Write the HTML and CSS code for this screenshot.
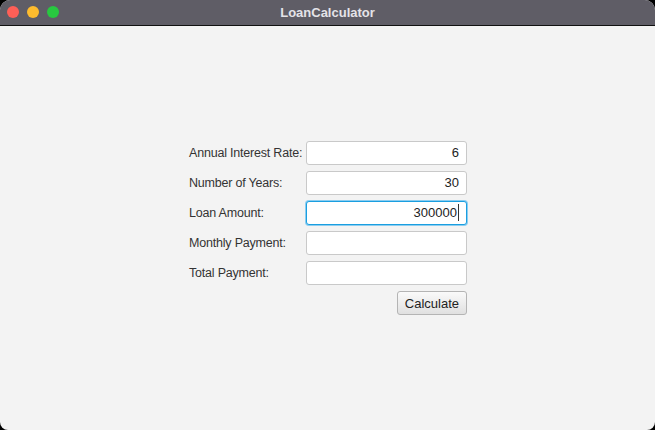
FILE: index.html
```html
<!DOCTYPE html>
<html lang="en">
<head>
    <meta charset="UTF-8">
    <title>LoanCalculator</title>
    <link rel="stylesheet" href="styles.css">
</head>
<body>
    <div class="window">
        <header class="titlebar">
            <div class="lights">
                <span class="light red"></span>
                <span class="light yellow"></span>
                <span class="light green"></span>
            </div>
            <div class="title">LoanCalculator</div>
        </header>

        <main class="content">
            <div class="form">
                <label>Annual Interest Rate:</label>
                <div class="field">6</div>

                <label>Number of Years:</label>
                <div class="field">30</div>

                <label>Loan Amount:</label>
                <div class="field focused">300000<span class="caret"></span></div>

                <label>Monthly Payment:</label>
                <div class="field"></div>

                <label>Total Payment:</label>
                <div class="field"></div>

                <div class="actions">
                    <button>Calculate</button>
                </div>
            </div>
        </main>
    </div>
</body>
</html>
```

FILE: styles.css
```css
html {
    background-color: #000;
}

body {
    margin: 0;
    font-family: "Liberation Sans", Arial, sans-serif;
    color: #333;
}

.window {
    width: 655px;
    height: 430px;
    display: flex;
    flex-direction: column;
    background-color: #f3f3f3;
    border-radius: 10px 10px 8px 8px;
    overflow: hidden;
}

.titlebar {
    position: relative;
    height: 25px;
    background-color: #5f5d66;
    border-bottom: 1px solid #111;
    display: flex;
    align-items: center;
    justify-content: center;
}

.lights {
    position: absolute;
    left: 7px;
    top: 6px;
    display: flex;
    gap: 8px;
}

.light {
    width: 12px;
    height: 12px;
    border-radius: 50%;
}

.red { background-color: #fe5f57; }
.yellow { background-color: #febc2e; }
.green { background-color: #28c840; }

.title {
    color: #e4e3e8;
    font-size: 13px;
    font-weight: bold;
}

.content {
    flex: 1;
    display: flex;
    align-items: center;
    justify-content: center;
}

.form {
    display: grid;
    grid-template-columns: 117px 161px;
    row-gap: 6px;
    align-items: center;
    margin-left: 1px;
}

label {
    font-size: 12.5px;
    color: #333;
    white-space: nowrap;
    letter-spacing: -0.2px;
}

.field {
    height: 22px;
    box-sizing: content-box;
    background-color: #fff;
    border: 1px solid #c9c9c9;
    border-radius: 3px;
    text-align: right;
    padding-right: 7px;
    font-size: 13px;
    line-height: 22px;
    color: #222;
}

.field.focused {
    border-color: #1a9ee0;
    box-shadow: 0 0 0 1px #8bcdf0;
}

.caret {
    display: inline-block;
    width: 1px;
    height: 17px;
    margin-left: 1px;
    vertical-align: -4px;
    background-color: #333;
}

.actions {
    grid-column: 2;
    display: flex;
    justify-content: flex-end;
}

button {
    height: 24px;
    padding: 0 7px;
    font-family: inherit;
    font-size: 13px;
    color: #222;
    background: linear-gradient(#fafafa, #e0e0e0);
    border: 1px solid #b4b4b4;
    border-radius: 3px;
}
```
